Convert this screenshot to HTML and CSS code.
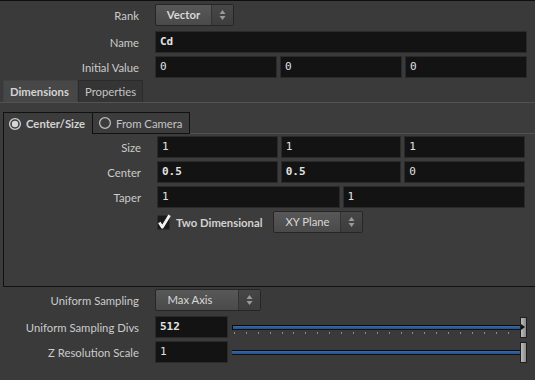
FILE: index.html
```html
<!DOCTYPE html>
<html lang="en">
<head>
  <meta charset="UTF-8">
  <title>Parameters</title>
  <link rel="stylesheet" href="styles.css">
</head>
<body>
  <div class="panel">
    <div class="row row-rank">
      <label>Rank</label>
      <div class="menu menu-rank">
        <span class="menu-text bold">Vector</span>
        <span class="menu-arrows"><svg width="7" height="12" viewBox="0 0 7 12"><path d="M3.5 1 L6.5 5 L0.5 5 Z M3.5 11 L6.5 7 L0.5 7 Z" fill="#9a9a9a"/></svg></span>
      </div>
    </div>
    <div class="row row-name">
      <label>Name</label>
      <div class="fields"><div class="field bold">Cd</div></div>
    </div>
    <div class="row">
      <label>Initial Value</label>
      <div class="fields">
        <div class="field">0</div>
        <div class="field">0</div>
        <div class="field">0</div>
      </div>
    </div>

    <div class="tabs">
      <div class="tab active">Dimensions</div>
      <div class="tab">Properties</div>
    </div>

    <div class="tabpage">
      <div class="radios">
        <div class="radio selected">
          <svg width="14" height="14" viewBox="0 0 14 14"><circle cx="7" cy="7" r="5.4" fill="none" stroke="#cfcfcf" stroke-width="1.3"/><circle cx="7" cy="7" r="3.2" fill="#d6d6d6"/></svg>
          <span>Center/Size</span>
        </div>
        <div class="radio">
          <svg width="14" height="14" viewBox="0 0 14 14"><circle cx="7" cy="7" r="5.4" fill="none" stroke="#bdbdbd" stroke-width="1.3"/></svg>
          <span>From Camera</span>
        </div>
        <div class="radio-rest"></div>
      </div>
      <div class="frame">
        <div class="row">
          <label>Size</label>
          <div class="fields">
            <div class="field">1</div>
            <div class="field">1</div>
            <div class="field">1</div>
          </div>
        </div>
        <div class="row">
          <label>Center</label>
          <div class="fields">
            <div class="field bold">0.5</div>
            <div class="field bold">0.5</div>
            <div class="field">0</div>
          </div>
        </div>
        <div class="row">
          <label>Taper</label>
          <div class="fields">
            <div class="field">1</div>
            <div class="field">1</div>
          </div>
        </div>
        <div class="row">
          <label></label>
          <div class="check">
            <svg width="14" height="16" viewBox="0 0 14 16"><rect x="0.5" y="1.5" width="12" height="14" fill="#1a1a1a" stroke="#2e2e2e"/><path d="M2.3 8.6 L5.3 13.2 L12.6 1.2" fill="none" stroke="#f2f2f2" stroke-width="2.8" stroke-linejoin="round"/></svg>
            <span class="bold">Two Dimensional</span>
          </div>
          <div class="menu menu-plane">
            <span class="menu-text">XY Plane</span>
            <span class="menu-arrows"><svg width="7" height="12" viewBox="0 0 7 12"><path d="M3.5 1 L6.5 5 L0.5 5 Z M3.5 11 L6.5 7 L0.5 7 Z" fill="#9a9a9a"/></svg></span>
          </div>
        </div>
      </div>
    </div>

    <div class="row row-sampling">
      <label>Uniform Sampling</label>
      <div class="menu menu-axis">
        <span class="menu-text">Max Axis</span>
        <span class="menu-arrows"><svg width="7" height="12" viewBox="0 0 7 12"><path d="M3.5 1 L6.5 5 L0.5 5 Z M3.5 11 L6.5 7 L0.5 7 Z" fill="#9a9a9a"/></svg></span>
      </div>
    </div>
    <div class="row row-divs">
      <label>Uniform Sampling Divs</label>
      <div class="field short bold">512</div>
      <div class="slider">
        <div class="rail">
          <div class="track capped"></div>
          <div class="ticks"></div>
        </div>
        <div class="handle notched"></div>
      </div>
    </div>
    <div class="row">
      <label>Z Resolution Scale</label>
      <div class="field short">1</div>
      <div class="slider">
        <div class="rail plain">
          <div class="track"></div>
        </div>
        <div class="handle"></div>
      </div>
    </div>
  </div>
</body>
</html>
```

FILE: styles.css
```css
html, body {
  margin: 0;
  padding: 0;
  background: #3a3a3a;
}
body {
  width: 535px;
  height: 380px;
  overflow: hidden;
  font-family: Lato, "Open Sans", sans-serif;
  font-size: 11.3px;
  color: #cbcbcb;
}
* {
  box-sizing: border-box;
}
.panel {
  border-top: 1px solid #0e0e0e;
  padding: 0 8px 0 0;
}
.bold {
  font-weight: bold;
}

/* parameter rows */
.row {
  display: flex;
  align-items: center;
  height: 22px;
  margin-top: 3px;
}
.row label {
  width: 139px;
  flex: none;
  text-align: right;
  margin-right: 16px;
  white-space: nowrap;
}
.row-rank {
  margin-top: 3px;
}
.row-name {
  margin-top: 5px;
}
.fields {
  flex: 1;
  display: flex;
  gap: 3px;
}
.field {
  flex: 1;
  height: 22px;
  line-height: 20px;
  background: #131313;
  border: 1px solid #2a2a2a;
  padding: 0 4px;
  font-family: "DejaVu Sans Mono", monospace;
  font-size: 11px;
  color: #e2e2e2;
}
.field.short {
  flex: none;
  width: 73px;
}

/* menus */
.menu {
  display: flex;
  height: 22px;
  border: 1px solid #262626;
  border-radius: 2px;
  background: linear-gradient(#585858, #4a4a4a);
  color: #d8d8d8;
}
.menu-text {
  flex: 1;
  text-align: center;
  line-height: 20px;
  white-space: nowrap;
}
.menu-arrows {
  width: 22px;
  display: flex;
  align-items: center;
  justify-content: center;
  background: linear-gradient(#474747, #3d3d3d);
  border-left: 1px solid #333;
}
.menu-rank {
  width: 79px;
}
.menu-plane {
  width: 90px;
  margin-left: 11px;
}
.menu-axis {
  width: 106px;
}
.menu-axis .menu-text {
  padding-right: 14px;
}

/* tabs */
.tabs {
  display: flex;
  margin: 2px 0 0 3px;
  height: 22px;
}
.tab {
  padding: 0 6px;
  line-height: 21px;
  border: 1px solid #2b2b2b;
  border-bottom: none;
  background: #353535;
  color: #c4c4c4;
}
.tab.active {
  width: 75px;
  background: #474747;
  font-weight: bold;
  color: #d4d4d4;
  border-color: #414141;
}
.tabpage {
  border-top: 1px solid #525252;
  background: #3c3c3c;
  margin-right: -8px;
  padding-top: 9px;
}

/* radio folder */
.radios {
  display: flex;
  height: 22px;
  margin-left: 3px;
}
.radio {
  display: flex;
  align-items: center;
  gap: 4px;
  padding: 0 4px;
  white-space: nowrap;
  color: #c4c4c4;
  border-top: 1px solid #111;
}
.radio.selected {
  width: 89px;
  font-weight: bold;
  color: #d2d2d2;
  border-left: 1px solid #111;
}
.radio:not(.selected) {
  width: 98px;
  padding-left: 5px;
  border: 1px solid #111;
}
.radio-rest {
  flex: 1;
  border-bottom: 1px solid #525252;
}
.frame {
  margin-left: 3px;
  height: 153px;
  padding: 2px 10px 0 0;
  border-left: 1px solid #111;
  border-bottom: 1px solid #111;
}
.frame .row:first-child {
  margin-top: 0;
}
.frame .row label {
  width: 137px;
}
.check {
  display: flex;
  align-items: center;
  gap: 5px;
  color: #d2d2d2;
}

/* bottom rows */
.row-sampling {
  margin-top: 2px;
}
.row-divs {
  margin-top: 5px;
}
.slider {
  flex: 1;
  display: flex;
  align-items: center;
  margin-left: 4px;
}
.rail {
  flex: 1;
  padding-top: 5px;
  margin-right: -2px;
}
.rail.plain {
  padding-top: 0;
}
.track {
  height: 5px;
  border-top: 1px solid #0c0c0c;
  border-bottom: 1px solid #101010;
  background: linear-gradient(#3a6aaa, #22508c);
}
.track.capped {
  border-left: 1px solid #0c0c0c;
}
.ticks {
  height: 2px;
  margin-top: 2px;
  background: repeating-linear-gradient(to right, #8e8e8e 0 1px, transparent 1px 11.9px);
  background-position: 2px 0;
}
.handle {
  position: relative;
  width: 7px;
  height: 21px;
  border: 1px solid #1e1e1e;
  background: linear-gradient(to right, #bdbdbd, #8a8a8a);
}
.handle.notched::after {
  content: "";
  position: absolute;
  left: 0;
  top: 6px;
  border-left: 4px solid #111;
  border-top: 3px solid transparent;
  border-bottom: 3px solid transparent;
}
```
